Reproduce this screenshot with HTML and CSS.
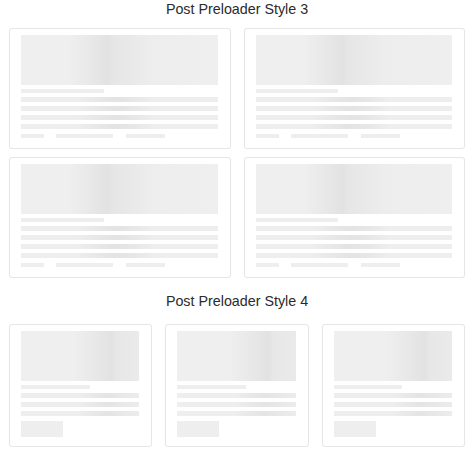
FILE: index.html
```html
<!DOCTYPE html>
<html lang="en">

<head>
    <meta charset="UTF-8">
    <meta name="viewport" content="width=device-width, initial-scale=1.0">
    <title>Post Preloaders</title>
    <link rel="stylesheet" href="styles.css">
</head>

<body>
    <h2 class="section-title">Post Preloader Style 3</h2>

    <div class="grid grid-2">
        <!-- Style 3 card -->
        <div class="card">
            <div class="ph-image shimmer"></div>
            <div class="ph-title"></div>
            <div class="ph-line shimmer-line"></div>
            <div class="ph-line shimmer-line"></div>
            <div class="ph-line shimmer-line"></div>
            <div class="ph-line shimmer-line"></div>
            <div class="ph-meta">
                <span class="meta-a"></span>
                <span class="meta-b"></span>
                <span class="meta-c"></span>
            </div>
        </div>

        <div class="card">
            <div class="ph-image shimmer"></div>
            <div class="ph-title"></div>
            <div class="ph-line shimmer-line"></div>
            <div class="ph-line shimmer-line"></div>
            <div class="ph-line shimmer-line"></div>
            <div class="ph-line shimmer-line"></div>
            <div class="ph-meta">
                <span class="meta-a"></span>
                <span class="meta-b"></span>
                <span class="meta-c"></span>
            </div>
        </div>

        <div class="card">
            <div class="ph-image shimmer"></div>
            <div class="ph-title"></div>
            <div class="ph-line shimmer-line"></div>
            <div class="ph-line shimmer-line"></div>
            <div class="ph-line shimmer-line"></div>
            <div class="ph-line shimmer-line"></div>
            <div class="ph-meta">
                <span class="meta-a"></span>
                <span class="meta-b"></span>
                <span class="meta-c"></span>
            </div>
        </div>

        <div class="card">
            <div class="ph-image shimmer"></div>
            <div class="ph-title"></div>
            <div class="ph-line shimmer-line"></div>
            <div class="ph-line shimmer-line"></div>
            <div class="ph-line shimmer-line"></div>
            <div class="ph-line shimmer-line"></div>
            <div class="ph-meta">
                <span class="meta-a"></span>
                <span class="meta-b"></span>
                <span class="meta-c"></span>
            </div>
        </div>
    </div>

    <h2 class="section-title second">Post Preloader Style 4</h2>

    <div class="grid grid-3">
        <!-- Style 4 card -->
        <div class="card">
            <div class="ph-image shimmer-right"></div>
            <div class="ph-title short"></div>
            <div class="ph-line shimmer-line-right"></div>
            <div class="ph-line shimmer-line-right"></div>
            <div class="ph-line shimmer-line-right"></div>
            <div class="ph-button"></div>
        </div>

        <div class="card">
            <div class="ph-image shimmer-right"></div>
            <div class="ph-title short"></div>
            <div class="ph-line shimmer-line-right"></div>
            <div class="ph-line shimmer-line-right"></div>
            <div class="ph-line shimmer-line-right"></div>
            <div class="ph-button"></div>
        </div>

        <div class="card">
            <div class="ph-image shimmer-right"></div>
            <div class="ph-title short"></div>
            <div class="ph-line shimmer-line-right"></div>
            <div class="ph-line shimmer-line-right"></div>
            <div class="ph-line shimmer-line-right"></div>
            <div class="ph-button"></div>
        </div>
    </div>
</body>
</html>
```

FILE: styles.css
```css
body {
    background: #fff;
    color: #2b2b2b;
    font-family: 'Liberation Sans', Arial, sans-serif;
    margin: 0;
    padding: 0 9px;
}

.section-title {
    font-size: 14.3px;
    font-weight: normal;
    line-height: 18px;
    text-align: center;
    margin: 0 0 10px;
}

.section-title.second {
    margin: 14px 0 14px;
}

.grid {
    display: grid;
    column-gap: 13px;
    row-gap: 8px;
}

.grid-2 {
    grid-template-columns: 1fr 1fr;
}

.grid-3 {
    grid-template-columns: 1fr 1fr 1fr;
}

.card {
    background: #fff;
    border: 1px solid #e6e6e6;
    border-radius: 3px;
    padding: 6px 12px 10px 11px;
    box-shadow: 0 0 1px rgba(0, 0, 0, 0.04);
}

.grid-3 .card {
    padding-bottom: 9px;
}

.ph-image {
    height: 50px;
    background: #eee;
}

/* static frame of the shimmer sweep */
.shimmer {
    background: linear-gradient(to right, #efefef 0%, #efefef 24%, #e9e9e9 34%, #e2e2e2 44%, #e6e6e6 47%, #e9e9e9 56%, #ededed 66%, #efefef 100%);
}

.shimmer-right {
    background: linear-gradient(to right, #efefef 0%, #efefef 44%, #e9e9e9 60%, #e2e2e2 77%, #e7e7e7 81%, #eaeaea 100%);
}

.ph-title {
    height: 4px;
    width: 42%;
    margin-top: 4px;
    background: #eee;
}

.ph-title.short {
    width: 58%;
}

.ph-line {
    height: 5px;
    margin-top: 4px;
    background: #eee;
}

.shimmer-line {
    background: linear-gradient(to right, #eeeeee 0%, #eeeeee 28%, #e8e8e8 38%, #e3e3e3 48%, #e7e7e7 58%, #eeeeee 68%, #eeeeee 100%);
}

.shimmer-line-right {
    background: linear-gradient(to right, #eeeeee 0%, #eeeeee 48%, #e8e8e8 62%, #e4e4e4 74%, #e8e8e8 86%, #ececec 100%);
}

.ph-meta {
    display: flex;
    margin-top: 5px;
    height: 4px;
}

.ph-meta span {
    display: block;
    background: #eee;
}

.meta-a {
    width: 23px;
}

.meta-b {
    width: 57px;
    margin-left: 12px;
}

.meta-c {
    width: 39px;
    margin-left: 13px;
}

.ph-button {
    width: 42px;
    height: 16px;
    margin-top: 5px;
    background: #eee;
}
```
